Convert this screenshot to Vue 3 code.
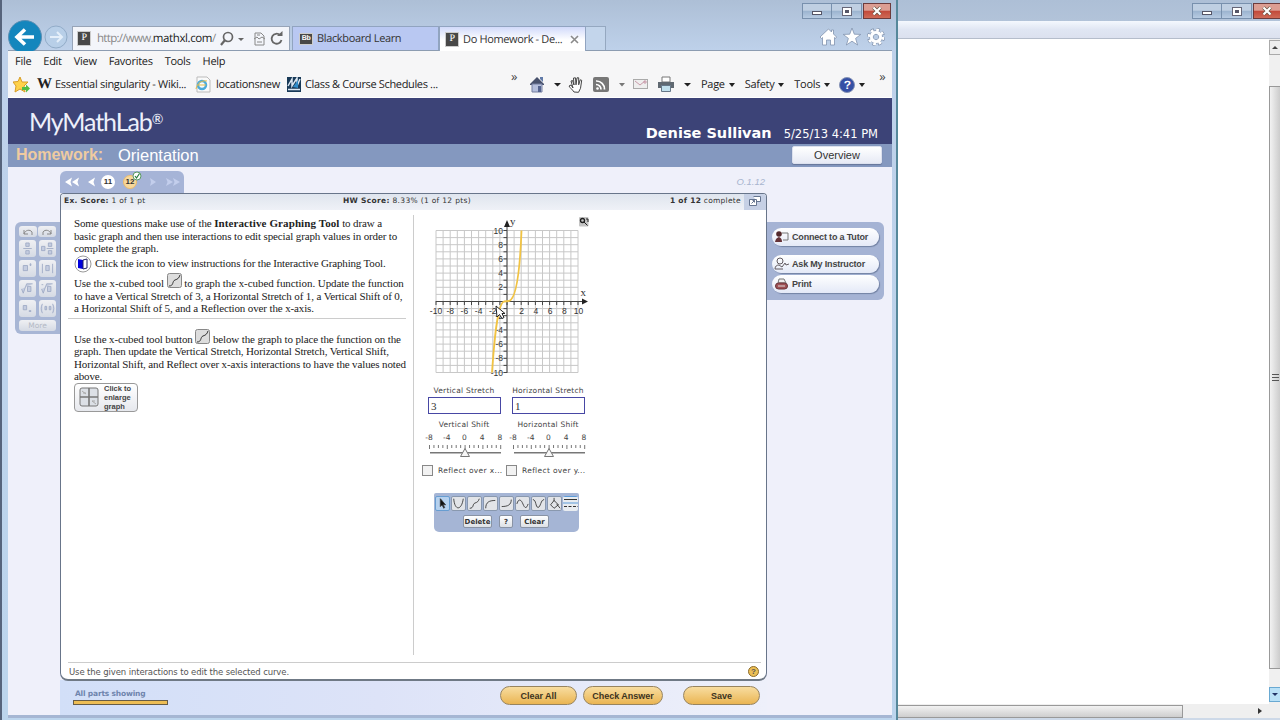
<script setup>
import { ref } from "vue";

const verticalStretch = ref("3");
const horizontalStretch = ref("1");
const reflectX = ref(false);
const reflectY = ref(false);

const menus = ["File", "Edit", "View", "Favorites", "Tools", "Help"];
const commands = ["Page", "Safety", "Tools"];
const shiftLabels = ["-8", "-4", "0", "4", "8"];
const shifts = ["Vertical Shift", "Horizontal Shift"];

// graph geometry
const ox = 507;
const oy = 301.5;
const unit = 7.1;
const grid = Array.from({ length: 21 }, (_, i) => i - 10);
const xLabels = [-10, -8, -6, -4, -2, 2, 4, 6, 8, 10];
const yLabels = [10, 8, 6, 4, 2, -2, -4, -6, -8, -10];

// palette on the left side of the exercise
const palette = [
  "M8 2h4v4H8zM5 8.5h10M8 11h4v4H8z",
  "M3 6h4v5H3zM11 2h4v4h-4zM9 8.5h8M11 11h4v4h-4z",
  "M5 5h5v6H5zM13 3h1v2h-1z",
  "M4 3v11M16 3v11M8 5h4v6H8z",
  "M3 9l2 5 4-11h7M10 6h4v6h-4z",
  "M3 9l2 5 4-11h7M3 4h2M10 6h4v6h-4z",
  "M5 5h4v5H5zM12 11h2v1h-2z",
  "M4 3c-2 4-2 7 0 11M16 3c2 4 2 7 0 11M7 6h2v4H7zM12 6h2v4h-2z",
];

// drawing tools under the graph
const tools = [
  "M5 2v9l2-2 2 4 1-1-2-3h3z",
  "M2 2c1 14 9 14 11 0",
  "M2 13c5 0 3-5 6-6s4-2 5-5",
  "M2 13c0-7 4-9 11-9",
  "M2 11c7 0 11-2 11-8",
  "M1 8c2-7 5-5 7 0s4 6 6 0",
  "M1 3c4 0 3 9 6 9s3-9 7-9",
  "M3 9l4-5 5 5-5 4zM7 5V1M10 8l4 5",
  "M1 3.5h13",
];
</script>

<template>
  <div class="desktop">
    <div class="browser">
      <!-- title bar -->
      <div class="titlebar">
        <div class="win-buttons">
          <span class="win-btn"><i class="min"></i></span>
          <span class="win-btn"><i class="max"></i></span>
          <span class="win-btn close">
            <svg width="12" height="10" viewBox="0 0 12 10"><path d="M2.5 1.5l7 7M9.5 1.5l-7 7" stroke="#654" stroke-width="3.6" /><path d="M2.5 1.5l7 7M9.5 1.5l-7 7" stroke="#fff" stroke-width="2.2" /></svg>
          </span>
        </div>
      </div>
      <!-- address bar and tabs -->
      <div class="navbar">
        <svg class="nav-arrows" width="64" height="34" viewBox="0 0 64 34">
          <circle cx="17" cy="17" r="16.5" fill="#1486bd" stroke="#5b8fb3" />
          <path d="M26 17H10M17 9.500l-8 7.500 8 7.500" fill="none" stroke="#fff" stroke-width="3.6" />
          <circle cx="48" cy="17" r="11" fill="#b8cfe8" stroke="#92acc8" />
          <path d="M42 17h11M49 12l5 5-5 5" fill="none" stroke="#e5effa" stroke-width="2" />
        </svg>
        <div class="address">
          <span class="favicon">P</span>
          <span class="url">http://www.<b>mathxl.com</b>/</span>
          <svg width="72" height="20" viewBox="0 0 72 20" fill="none" stroke="#666">
            <circle cx="11" cy="8" r="4.500" stroke-width="1.700" />
            <path d="M8 11l-4 5" stroke-width="2.200" />
            <path d="M21 9h6l-3 3z" fill="#666" stroke="none" />
            <path d="M38 4h6l3 3v9h-9zM37 10l3-2 2 2 3-2 3 2M40 6h3M40 13h5" stroke="#888" />
            <path d="M63 6a5 5 0 1 0 1.500 5" stroke-width="1.800" />
            <path d="M60 7h5.500V2z" fill="#666" stroke="none" />
          </svg>
        </div>
        <div class="tab">
          <span class="favicon small">Bb</span>
          <span>Blackboard Learn</span>
        </div>
        <div class="tab active">
          <span class="favicon">P</span>
          <span>Do Homework - De...</span>
          <svg width="9" height="9" viewBox="0 0 9 9"><path d="M1 1l7 7M8 1L1 8" stroke="#8a8a8a" stroke-width="1.600" /></svg>
        </div>
        <div class="new-tab"></div>
        <svg class="chrome-icons" width="70" height="20" viewBox="0 0 70 20" fill="#fff" stroke="#8193ae" stroke-width=".8">
          <path d="M2 10l8.500-8 3 3V3h2v4l3 3-1 1.500-1-1V18h-4v-5h-4v5h-4v-7.500l-1 1z" />
          <path d="M34 1l2.300 6.200 6.500.2-5.200 4 2 6.600-5.600-3.800-5.600 3.800 2-6.600-5.200-4 6.500-.2z" />
          <circle cx="58" cy="10" r="7.300" fill="none" stroke="#8193ae" stroke-width="3.500" stroke-dasharray="3.500 2.233" />
          <path fill-rule="evenodd" d="M58 3.500a6.500 6.500 0 1 0 .01 0zM58 7.300a2.700 2.700 0 1 1-.01 0z" />
          <circle cx="58" cy="10" r="7" fill="none" stroke="#fff" stroke-width="2.800" stroke-dasharray="2.700 2.798" />
        </svg>
      </div>
      <div class="menubar">
        <span v-for="m in menus" :key="m">{{ m }}</span>
      </div>
      <div class="favbar">
        <svg width="17" height="18" viewBox="0 0 17 18">
          <path d="M7 1l2 5h6l-4 4 1 6-5-3-5 3 1-6-3-4 5-.5z" fill="#ffd24a" stroke="#d79d28" />
          <path d="M9 11h4V8.500l4 4-4 4V14H9z" fill="#50bd43" />
        </svg>
        <span class="wiki">W</span>
        <span class="link essential">Essential singularity - Wiki...</span>
        <svg width="16" height="17" viewBox="0 0 16 17">
          <path d="M2 1h10l3 3v12H2z" fill="#fafafa" stroke="#bbb" />
          <circle cx="7" cy="9" r="4" fill="none" stroke="#4dabda" stroke-width="2.500" />
          <path d="M3 9h8M1 13C2 7 7 4 12 5" fill="none" stroke="#e6bd49" />
        </svg>
        <span class="link locations">locationsnew</span>
        <svg width="14" height="15" viewBox="0 0 14 15">
          <path d="M0 0h14v15H0z" fill="#183957" />
          <path d="M1 9L5 2v7l5-8v8l3-7M1 12.500h12" fill="none" stroke="#dbe8f3" stroke-width="1.500" />
          <path d="M6 10l5-7v8z" fill="#2e8bc8" />
        </svg>
        <span class="link classes">Class &amp; Course Schedules ...</span>
        <span class="more">»</span>
        <svg class="cmd-icons" width="172" height="20" viewBox="0 0 172 20">
          <path d="M2 9l7-7 7 7v1H2z" fill="#47506c" />
          <path d="M4 9h10v8H4z" fill="#b4bedc" stroke="#757f9f" />
          <path d="M10 11h3v6h-3z" fill="#53628e" />
          <path d="M12 2h3v5l-3-3z" fill="#607aa8" />
          <path d="M26 8h7l-3.500 3.500zM156 8h7l-3.500 3.500z" fill="#222" />
          <path d="M91 8h6l-3 3.500z" fill="#777" />
          <path d="M46 17c-2-3-4-4-5-6l2-1 2 3-2-7 1.500-.5L46 10l-.5-7 2-.2.500 7 1-7h1.700v7l1.500-5 1.500.5-1.200 8-2 4z" fill="#fff" stroke="#444" />
          <rect x="65" y="2" width="16" height="15" rx="2" fill="#777" />
          <path d="M68 6a8 8 0 0 1 8.500 8.500M68 9.500a5 5 0 0 1 5 5" fill="none" stroke="#fff" stroke-width="1.700" />
          <circle cx="69.500" cy="13.500" r="1.300" fill="#fff" />
          <rect x="105.500" y="4.500" width="14" height="9" fill="#eee" stroke="#aaa" />
          <path d="M107 6l5 4 5-4M116 6h2v2h-2z" fill="none" stroke="#c99aaa" />
          <path d="M134 2h8v5h-8z" fill="#fff" stroke="#777" />
          <path d="M130 7h16v6h-16z" fill="#5f6871" />
          <path d="M133.500 10.500h9v6h-9z" fill="#c1e0ed" stroke="#678" />
        </svg>
        <span v-for="c in commands" :key="c" class="command">
          {{ c }}<i class="caret"></i>
        </span>
        <span class="help-ball">?</span>
        <i class="caret"></i>
        <span class="more last">»</span>
      </div>

      <div class="product">
        <div class="logo">MyMathLab<sup>®</sup></div>
        <div class="user"><b>Denise Sullivan</b><span>5/25/13 4:41 PM</span></div>
      </div>
      <div class="assignment">
        <b>Homework:</b>
        <span>Orientation</span>
        <button>Overview</button>
      </div>

      <div class="content">
        <!-- math palette -->
        <div class="palette">
          <div class="palette-pair">
            <span><svg width="18" height="11" viewBox="0 0 18 11"><path d="M5 4v4h4M5 8c1-4 6-5 8-2v3" /></svg></span>
            <span><svg width="18" height="11" viewBox="0 0 18 11"><path d="M13 4v4H9M13 8c-1-4-6-5-8-2v3" /></svg></span>
          </div>
          <div class="palette-grid">
            <span v-for="(p, i) in palette" :key="i">
              <svg width="17" height="17" viewBox="0 0 20 17"><path :d="p" /></svg>
            </span>
          </div>
          <span class="palette-more">More</span>
        </div>

        <div class="exercise">
          <div class="pager-row">
            <div class="pager">
              <svg width="40" height="12" viewBox="0 0 40 12" fill="#fff"><path d="M8 1.500L1 6l7 4.500L6.500 6zM15 1.500L8 6l7 4.500L13.500 6zM31 1.500L24 6l7 4.500L29.500 6z" /></svg>
              <span class="page">11</span>
              <span class="page current">12
                <svg class="check" width="10" height="10" viewBox="0 0 10 10"><circle cx="5" cy="5" r="4" fill="#fff" stroke="#5a9a64" /><path d="M3 5l1.500 2L7.500 2.500" fill="none" stroke="#287c3c" stroke-width="1.200" /></svg>
              </span>
              <svg width="36" height="10" viewBox="0 0 36 10" fill="#c3ceec"><path d="M6 1l6 4-6 4 1-4zM22 1l7 4-7 4 1.500-4zM29 1l7 4-7 4 1.500-4z" /></svg>
            </div>
            <span class="exercise-id">O.1.12</span>
          </div>
          <div class="panel">
            <div class="score">
              <span class="ex"><b>Ex. Score:</b> 1 of 1 pt</span>
              <span class="hw"><b>HW Score:</b> 8.33% (1 of 12 pts)</span>
              <span class="done"><b>1 of 12</b> complete</span>
              <span class="popout">
                <svg width="14" height="12" viewBox="0 0 14 12" fill="#fff" stroke="#667590"><path d="M1.500 4.500h7v6h-7zM5.500 1.500h7v5h-4M3.500 8.500l3-3M4.500 5.500h2v2" /></svg>
              </span>
            </div>
            <div class="work">
              <div class="question">
                <p>
                  <span>Some questions make use of the <b>Interactive Graphing Tool</b> to draw a</span>
                  <span>basic graph and then use interactions to edit special graph values in order to</span>
                  <span>complete the graph.</span>
                </p>
                <p class="instructions">
                  <svg width="18" height="18" viewBox="0 0 18 18"><circle cx="9" cy="9" r="8" fill="#fff" stroke="#999" /><path d="M4 4l5 1v9l-5-1z" fill="#00d" /><path d="M9 5l4-1v9l-4 1z" fill="#fff" stroke="#226" /></svg>
                  <span>Click the icon to view instructions for the Interactive Graphing Tool.</span>
                </p>
                <p>
                  <span class="use">Use the x-cubed tool <svg class="cubed" width="15" height="15" viewBox="0 0 15 15"><rect x=".5" y=".5" width="14" height="14" rx="2" fill="#ddd" stroke="#888" /><path d="M2 13c5 0 3-5 6-6s4-2 5-5" fill="none" stroke="#333" /></svg> to graph the x-cubed function. Update the function</span>
                  <span>to have a Vertical Stretch of 3, a Horizontal Stretch of 1, a Vertical Shift of 0,</span>
                  <span>a Horizontal Shift of 5, and a Reflection over the x-axis.</span>
                </p>
                <hr />
                <p>
                  <span>Use the x-cubed tool button <svg class="cubed" width="15" height="15" viewBox="0 0 15 15"><rect x=".5" y=".5" width="14" height="14" rx="2" fill="#ddd" stroke="#888" /><path d="M2 13c5 0 3-5 6-6s4-2 5-5" fill="none" stroke="#333" /></svg> below the graph to place the function on the</span>
                  <span>graph. Then update the Vertical Stretch, Horizontal Stretch, Vertical Shift,</span>
                  <span>Horizontal Shift, and Reflect over x-axis interactions to have the values noted</span>
                  <span>above.</span>
                </p>
                <button class="enlarge">
                  <svg width="20" height="20" viewBox="0 0 20 20" fill="none" stroke="#777"><rect x="1" y="1" width="18" height="18" rx="2" fill="#dce0e6" /><path d="M10 1v18M1 10h18" stroke-width="1.600" /><path d="M3 4l4 3M13 14l4 3M4 6h3M13 14h3" stroke="#aaa" /></svg>
                  <span>Click to<br />enlarge<br />graph</span>
                </button>
              </div>
              <div class="graph-side">
                <svg class="graph" width="170" height="165" viewBox="425 215 170 165">
                  <g stroke="#c8c8c8">
                    <line v-for="n in grid" :key="'v' + n" :x1="ox + n * unit" :x2="ox + n * unit" y1="230.500" y2="372.500" />
                    <line v-for="n in grid" :key="'h' + n" x1="436" x2="578" :y1="oy + n * unit" :y2="oy + n * unit" />
                  </g>
                  <path d="M436 301.500h148M507 225v148" stroke="#444" />
                  <path d="M582 298.500l6 3-6 3zM504 227l3-7 3 7z" fill="#222" />
                  <g stroke="#444">
                    <line v-for="n in grid" :key="'tx' + n" :x1="ox + n * unit" :x2="ox + n * unit" y1="301" y2="305" />
                    <line v-for="n in grid" :key="'ty' + n" x1="503.500" x2="507" :y1="oy + n * unit" :y2="oy + n * unit" />
                  </g>
                  <g class="ticks">
                    <text v-for="n in xLabels" :key="'lx' + n" :x="ox + n * unit + (n < 0 ? 0 : 0.500)" y="313.500" text-anchor="middle">{{ n }}</text>
                    <text v-for="n in yLabels" :key="'ly' + n" x="503" :y="oy - n * unit + 3" text-anchor="end">{{ n }}</text>
                  </g>
                  <text class="axis" x="510" y="225">y</text>
                  <text class="axis" x="580.500" y="296">x</text>
                  <path d="M492 372.500C494 344 497 304 504 301.500L509 301C516 299 520 270 521.500 230.500" fill="none" stroke="#f1c343" stroke-width="1.800" />
                  <path d="M496 306l1 11 2.500-2.500 2.500 4 2-1-2-4h3z" fill="#fff" stroke="#222" />
                  <rect x="579" y="217" width="9.500" height="9.500" rx="1" fill="#c4c4c4" />
                  <circle cx="582.500" cy="220.500" r="2" fill="none" stroke="#222" stroke-width="1.300" />
                  <path d="M584 222l3.500 3.500M586 219h2v3" fill="none" stroke="#222" />
                </svg>
                <div class="fields">
                  <label>Vertical Stretch<input v-model="verticalStretch" type="text" /></label>
                  <label>Horizontal Stretch<input v-model="horizontalStretch" type="text" /></label>
                </div>
                <div class="sliders">
                  <div v-for="s in shifts" :key="s" class="slider">
                    <span class="slider-name">{{ s }}</span>
                    <div class="numbers"><span v-for="n in shiftLabels" :key="n">{{ n }}</span></div>
                    <svg width="74" height="14" viewBox="0 0 74 14">
                      <path v-for="n in 17" :key="n" :d="`M${1.500 + (n - 1) * 4.450} 1v${n % 4 === 1 ? 4 : 3}`" stroke="#777" />
                      <path d="M2 8.500h71" stroke="#777" /><path d="M2 9.500h71" stroke="#bbb" />
                      <path d="M37 4.500l4.500 8h-9z" fill="#f7f7f7" stroke="#777" />
                    </svg>
                  </div>
                </div>
                <div class="reflects">
                  <label><input v-model="reflectX" type="checkbox" />Reflect over x...</label>
                  <label><input v-model="reflectY" type="checkbox" />Reflect over y...</label>
                </div>
                <div class="toolbar">
                  <div class="tools">
                    <svg v-for="(t, i) in tools" :key="i" :class="{ selected: i === 0, pointer: i === 0, lines: i === 8 }" width="15" height="15" viewBox="0 0 15 15">
                      <path :d="t" />
                      <path v-if="i === 8" d="M0 .5h15M0 7h15" stroke="#5c9bd8" /><path v-if="i === 8" d="M1 10.500h14" stroke-dasharray="3 1.500" />
                    </svg>
                  </div>
                  <div class="actions">
                    <button class="delete">Delete</button>
                    <button class="what">?</button>
                    <button class="clear">Clear</button>
                  </div>
                </div>
              </div>
            </div>
            <div class="status">
              <span>Use the given interactions to edit the selected curve.</span>
              <i>?</i>
            </div>
          </div>
          <div class="footer">
            <div class="parts"><span>All parts showing</span><i></i></div>
            <button class="clear-all">Clear All</button>
            <button class="check-answer">Check Answer</button>
            <button class="save">Save</button>
          </div>
        </div>

        <div class="side">
          <button>
            <svg width="16" height="14" viewBox="0 0 16 14"><circle cx="5" cy="4" r="2.800" fill="#53282b" /><path d="M1 12c1-4 2-4 4-5 2 1 3 2 3 5z" fill="#653237" /><path d="M8 3h6v7H9" fill="none" stroke="#777" /></svg>
            <span>Connect to a Tutor</span>
          </button>
          <button class="ask">
            <svg width="16" height="14" viewBox="0 0 16 14" fill="none" stroke="#625b60"><circle cx="6" cy="4" r="3" /><path d="M1 12c0-3 2-4 4-4l3 2M1 12h8M8 10l3-4 1 2 3-1" /></svg>
            <span>Ask My Instructor</span>
          </button>
          <button class="print">
            <svg width="16" height="14" viewBox="0 0 16 14"><path d="M4 6l1-4h5l2 4z" fill="#eee" stroke="#777" /><rect x="1.500" y="6" width="12" height="6" rx="3" fill="#9f5155" stroke="#683338" /><path d="M4 9h7" stroke="#ddd" /></svg>
            <span>Print</span>
          </button>
        </div>
      </div>
    </div>

    <!-- window behind -->
    <div class="behind">
      <div class="titlebar">
        <div class="win-buttons">
          <span class="win-btn"><i class="min"></i></span>
          <span class="win-btn"><i class="max"></i></span>
          <span class="win-btn close">
            <svg width="12" height="10" viewBox="0 0 12 10"><path d="M2.500 1.500l7 7M9.500 1.500l-7 7" stroke="#654" stroke-width="3.600" /><path d="M2.500 1.500l7 7M9.500 1.500l-7 7" stroke="#fff" stroke-width="2.200" /></svg>
          </span>
        </div>
      </div>
      <div class="behind-strip"></div>
      <div class="behind-body">
        <div class="blank"></div>
        <div class="vscroll">
          <span class="arrow"><i class="up"></i></span>
          <span class="gap"></span>
          <span class="thumb"><i></i><i></i><i></i></span>
          <span class="gap-end"></span>
          <span class="arrow blue"><i class="down"></i></span>
        </div>
      </div>
      <div class="hscroll"><span class="hthumb"></span><i></i></div>
    </div>
  </div>
</template>

<style>
body {
  margin: 0;
  overflow: hidden;
}
</style>

<style scoped>
* {
  box-sizing: border-box;
}
svg {
  display: block;
  flex: none;
}
button {
  font-family: inherit;
  padding: 0;
  white-space: nowrap;
}
.desktop {
  display: grid;
  grid-template-columns: 898px 382px;
  width: 1280px;
  height: 720px;
  overflow: hidden;
  background: #fff;
  font-family: "DejaVu Sans", sans-serif;
  white-space: nowrap;
}
.browser {
  display: flex;
  flex-direction: column;
  height: 720px;
  padding: 0 4px 0 6px;
  background: linear-gradient(#adbfd6, #bed1ea 50px, #bcd5ed);
  border-left: 2px solid #56647c;
  border-right: 2px solid #56889b;
}
.titlebar {
  display: flex;
  flex: none;
  justify-content: flex-end;
  height: 26px;
  padding: 3px 1px 0 0;
}
.win-buttons {
  display: flex;
  height: 16px;
}
.win-btn {
  display: flex;
  flex: none;
  align-items: center;
  justify-content: center;
  width: 30px;
  height: 16px;
  border: 1px solid #7890ad;
  border-left-width: 0;
  background: linear-gradient(#bfcfe2 45%, #9bb3cf 50%, #b7cbe2);
}
.win-btn:first-child {
  border-left-width: 1px;
}
.win-btn.close {
  width: 28px;
  margin-left: 1px;
  border: 1px solid #6c3b3c;
  background: linear-gradient(#dc9d92 45%, #c2493a 50%, #cf6a56);
}
.min {
  width: 10px;
  height: 4px;
  margin-top: 4px;
  background: #fff;
  border: 1px solid #556;
}
.max {
  width: 10px;
  height: 9px;
  background: #556;
  border: 3px solid #fff;
  outline: 1px solid #667;
  outline-offset: -1px;
}
.navbar {
  display: flex;
  flex: none;
  height: 25px;
  border-bottom: 1px solid #8c9cb1;
  font: 11px "Open Sans", sans-serif;
  letter-spacing: -0.35px;
  text-rendering: geometricPrecision;
  color: #333;
}
.nav-arrows {
  margin: -6px 0 0;
}
.address {
  display: flex;
  align-items: center;
  width: 218px;
  height: 24px;
  padding-left: 5px;
  border: 1px solid #97a4b7;
  border-bottom: 0;
  background: #f3f5fa;
}
.favicon {
  flex: none;
  width: 12px;
  height: 13px;
  background: #484848;
  color: #fff;
  font: 10px/12px "Liberation Serif", serif;
  text-align: center;
  outline: 1px solid #ccc;
}
.favicon.small {
  height: 10px;
  font: bold 7px/9px "Liberation Sans", sans-serif;
}
.url {
  width: 121px;
  margin-left: 7px;
  color: #888;
  font-size: 11.500px;
  letter-spacing: -0.7px;
}
.url b {
  color: #222;
  font-weight: 400;
  letter-spacing: -0.4px;
}
.tab {
  display: flex;
  align-items: center;
  width: 147px;
  margin-left: 2px;
  padding-left: 7px;
  border: 1px solid #91a4c0;
  border-bottom: 0;
  background: #b9c8f2;
}
.tab span + span {
  margin-left: 5px;
}
.tab.active {
  width: 147px;
  height: 25px;
  margin-left: 0;
  padding-left: 6px;
  background: linear-gradient(#d1dafa, #fff 55%);
}
.tab.active span + span {
  width: 101px;
}
.tab.active svg {
  margin-left: 6px;
}
.new-tab {
  width: 20px;
  border: 1px solid #95a8c0;
  border-left: 0;
  border-bottom: 0;
  background: #c3d5eb;
}
.chrome-icons {
  margin: 1px 0 0 212px;
}
.menubar {
  display: flex;
  flex: none;
  gap: 12px;
  height: 21px;
  padding-left: 7px;
  background: #f6f6f7;
  color: #222;
  font: 11px/21px "Open Sans", sans-serif;
  letter-spacing: -0.28px;
  text-rendering: geometricPrecision;
}
.favbar {
  display: flex;
  flex: none;
  align-items: center;
  height: 26px;
  padding-left: 5px;
  background: #f6f6f7;
  border-bottom: 1px solid #fff;
  color: #222;
  font: 11px "Open Sans", sans-serif;
  letter-spacing: -0.3px;
  text-rendering: geometricPrecision;
}
.wiki {
  width: 18px;
  margin-left: 7px;
  font: bold 15px "Liberation Serif", serif;
}
.essential {
  width: 140px;
}
.locations {
  width: 71px;
  margin-left: 5px;
}
.classes {
  width: 137px;
  margin-left: 4px;
  letter-spacing: -0.35px;
}
.more {
  width: 10px;
  margin: -18px 0 0 69px;
  color: #444;
  font-size: 13px;
}
.cmd-icons {
  margin-left: 7px;
}
.command {
  display: flex;
  align-items: center;
  gap: 4px;
  margin-left: 10px;
}
.cmd-icons + .command {
  margin-left: 1px;
}
.caret {
  flex: none;
  border: 3.500px solid transparent;
  border-top: 4px solid #222;
  border-bottom: 0;
}
.help-ball {
  width: 16px;
  height: 16px;
  margin: 0 4px 0 9px;
  border: 1px solid #8794b6;
  border-radius: 50%;
  background: #3550a5;
  color: #fff;
  font: bold 12px/14px "Liberation Sans", sans-serif;
  text-align: center;
}
.more.last {
  margin-left: 14px;
}
.product {
  display: flex;
  flex: none;
  justify-content: space-between;
  height: 46px;
  padding-left: 21px;
  background: #3c4377;
  color: #fff;
}
.logo {
  color: #edf0fb;
  font: 25px/48px Lato, sans-serif;
  letter-spacing: -1.1px;
  text-rendering: geometricPrecision;
}
.logo sup {
  font-size: 14px;
  line-height: 0;
  vertical-align: 7px;
}
.user {
  padding: 26px 14px 0 0;
  font-size: 12px;
  line-height: 18px;
}
.user span {
  font-size: 11.500px;
}
.user b {
  margin-right: 12px;
  font-size: 14.500px;
}
.assignment {
  display: flex;
  flex: none;
  align-items: center;
  height: 23px;
  padding: 0 10px 1px 8px;
  background: #8498bf;
  color: #fff;
  font: 16px "Liberation Sans", sans-serif;
}
.assignment b {
  width: 102px;
  color: #efcba0;
}
.assignment span {
  font-size: 16.500px;
}
.assignment button {
  width: 90px;
  height: 18px;
  margin-left: auto;
  border: 1px solid #dce1ee;
  border-radius: 2px;
  background: linear-gradient(#fff, #e7eaf5);
  box-shadow: 0 1px 1px #66769a;
  color: #333;
  font-size: 11px;
}
.content {
  display: grid;
  grid-template-columns: 52px 707px 125px;
  flex: none;
  height: 551px;
  border-bottom: 3px solid #a5b6d3;
  background: #eff0fa;
}
.palette {
  align-self: start;
  width: 45px;
  height: 112px;
  margin: 55px 0 0 7px;
  padding: 4px 4px 0;
  border-radius: 6px 0 0 6px;
  background: #a8b6d5;
}
.palette svg {
  fill: #c5cde0;
  stroke: #9da9c4;
}
.palette span {
  border-radius: 3px;
  background: linear-gradient(#eff0f3, #d5dae4);
}
.palette-pair {
  display: flex;
  gap: 1px;
}
.palette-pair svg {
  fill: none;
  stroke: #888;
}
.palette-grid {
  display: grid;
  grid-template-columns: 17px 17px;
  grid-auto-rows: 17px;
  gap: 3px;
  margin: 3px 0;
}
.palette .palette-more {
  display: block;
  width: 37px;
  height: 11px;
  color: #b3b9c5;
  font-size: 7.500px;
  line-height: 11px;
  text-align: center;
}
.exercise {
  display: flex;
  flex-direction: column;
  background: linear-gradient(90deg, #d2dff8, #dde3f8 45%, #eef0fa) bottom / 100% 35px no-repeat;
}
.pager-row {
  display: flex;
  flex: none;
  justify-content: space-between;
  height: 26px;
  padding-top: 4px;
}
.pager {
  display: flex;
  align-items: center;
  width: 124px;
  padding-left: 4px;
  border-radius: 6px 6px 0 0;
  background: #a6b4d7;
}
.page {
  position: relative;
  width: 14px;
  height: 14px;
  margin-left: -3px;
  border-radius: 50%;
  background: #fff;
  color: #333;
  font: bold 8px/14px "Liberation Sans", sans-serif;
  text-align: center;
}
.page.current {
  margin: 0 7px 0 8px;
  background: #f7d89b;
  border: 1px solid #eebc6c;
  line-height: 12px;
}
.check {
  position: absolute;
  top: -5px;
  right: -6px;
}
.exercise-id {
  padding-right: 2px;
  color: #a8b5cf;
  font: italic 9.500px/22px "Liberation Sans", sans-serif;
}
.panel {
  display: flex;
  flex: none;
  flex-direction: column;
  height: 488px;
  border: 1px solid #68758a;
  border-bottom: 2px solid #6f7985;
  border-radius: 4px 4px 8px 8px;
  background: #fff;
  overflow: hidden;
}
.score {
  display: flex;
  flex: none;
  height: 16px;
  padding-left: 3px;
  background: linear-gradient(#dfe5ee, #eff1f7);
  color: #333;
  font-size: 7.500px;
  letter-spacing: 0.26px;
  line-height: 14px;
}
.ex {
  width: 279px;
}
.hw {
  width: 327px;
  letter-spacing: 0.32px;
}
.popout {
  width: 22px;
  height: 16px;
  margin-left: auto;
  padding: 1px 0 0 4px;
  background: #c6d0e5;
}
.work {
  display: flex;
  flex: none;
  height: 452px;
}
.question {
  width: 353px;
  height: 440px;
  margin-top: 5px;
  padding: 2px 0 0 13px;
  border-right: 1px solid #ccc;
  color: #222;
  font: 11px/12.500px "Liberation Serif", serif;
  letter-spacing: -0.13px;
}
.question b {
  letter-spacing: 0.1px;
}
.question .use {
  letter-spacing: -0.07px;
}
.question p {
  margin: 0;
}
.question p > span {
  display: block;
  height: 12.500px;
}
.question .instructions {
  display: flex;
  align-items: center;
  gap: 3px;
  height: 18px;
  margin: 0 0 4.500px;
  letter-spacing: -0.17px;
}
.cubed {
  display: inline-block;
  vertical-align: -1px;
  margin: -4px 0 0;
}
hr {
  width: 338px;
  margin: 3px 0 14px -6px;
  border: 0;
  border-top: 1px solid #ccc;
}
.enlarge {
  display: flex;
  align-items: center;
  gap: 5px;
  width: 64px;
  height: 29px;
  padding-left: 4px;
  border: 1px solid #999;
  border-radius: 4px;
  background: linear-gradient(#fff, #e6e8ed);
  color: #444;
  font: bold 7.500px/9px "Liberation Sans", sans-serif;
  text-align: left;
}
.graph-side {
  width: 170px;
  margin: 5px 0 0 11px;
  color: #444;
  font-size: 7.500px;
}
.ticks {
  fill: #333;
  font: 8.500px "Liberation Sans", sans-serif;
}
.axis {
  fill: #333;
  font: 11px "Liberation Serif", serif;
}
.fields,
.sliders {
  display: flex;
  gap: 12px;
  padding-left: 3px;
}
.fields {
  margin-top: 5px;
}
.fields label {
  width: 72px;
  letter-spacing: 0.22px;
  line-height: 11px;
  text-align: center;
}
.fields input {
  display: block;
  width: 73px;
  height: 17px;
  margin-top: 1px;
  padding: 0 2px;
  border: 1px solid #4747a4;
  color: #333;
  font: 11px "Liberation Serif", serif;
}
.sliders {
  margin-top: 5px;
}
.slider {
  width: 72px;
  height: 40px;
}
.slider-name {
  display: block;
  letter-spacing: 0.22px;
  line-height: 12px;
  text-align: center;
}
.numbers {
  display: flex;
  justify-content: space-between;
  margin: 1px -8px 0 -7px;
  line-height: 12px;
}
.numbers span {
  width: 16px;
  text-align: center;
}
.reflects {
  display: flex;
  margin: 6px 0 0 -3px;
}
.reflects label {
  display: flex;
  align-items: center;
  gap: 5px;
  width: 84px;
  letter-spacing: 0.33px;
  line-height: 11px;
}
.reflects input {
  appearance: none;
  flex: none;
  width: 11px;
  height: 11px;
  margin: 0;
  border: 1px solid #888;
  background: #f2f2f2;
}
.toolbar {
  width: 145px;
  height: 39px;
  margin: 17px 0 0 9px;
  padding: 3px 1px;
  border-radius: 2px 2px 5px 5px;
  background: #a5b5d5;
}
.tools {
  display: flex;
  justify-content: space-between;
}
.tools svg {
  border: 1px solid #8998ae;
  border-radius: 2px;
  background: #e2e4e8;
  fill: none;
  stroke: #333;
}
.tools svg.selected {
  background: #b6d1ee;
  border-color: #679dd1;
}
.tools svg.pointer {
  fill: #111;
}
.tools svg.lines {
  border: 0;
  background: #e8ecf0;
}
.actions {
  display: flex;
  gap: 7px;
  margin: 4px 0 0 28px;
}
.actions button {
  width: 29px;
  height: 13px;
  border: 1px solid #8993a4;
  border-radius: 2px;
  background: linear-gradient(#fff, #dce0e6);
  color: #333;
  font-size: 7px;
  font-weight: bold;
  line-height: 10px;
}
.actions .what {
  width: 14px;
}
.status {
  display: flex;
  align-items: center;
  justify-content: space-between;
  height: 18px;
  margin: 0 5px 0 7px;
  padding: 1px 2px 0 1px;
  border-top: 1px solid #ccc;
  color: #555;
  font-size: 8.500px;
  letter-spacing: -0.12px;
}
.status i {
  width: 11px;
  height: 11px;
  border: 1px solid #8b6a2a;
  border-radius: 50%;
  background: #edbf54;
  font: bold 8px/9px "Liberation Sans", sans-serif;
  text-align: center;
}
.footer {
  display: flex;
  padding: 5px 7px 0 13px;
}
.parts {
  width: 427px;
  padding-top: 3px;
  color: #6f85ad;
  font-size: 7.500px;
  font-weight: bold;
  letter-spacing: -0.18px;
  line-height: 10px;
}
.parts span {
  margin-left: 2px;
}
.parts i {
  display: block;
  width: 95px;
  height: 5px;
  margin-top: 1px;
  border: 1px solid #665c47;
  background: #edbd54;
}
.footer button {
  width: 77px;
  height: 19px;
  border: 1px solid #98845e;
  border-radius: 10px;
  background: linear-gradient(#f8dda0, #eab553);
  color: #3c331f;
  font: bold 9px "Liberation Sans", sans-serif;
}
.footer .check-answer {
  width: 80px;
  margin-left: 6px;
}
.footer .save {
  margin-left: 20px;
}
.side {
  align-self: start;
  height: 78px;
  width: 117px;
  margin-top: 55px;
  padding: 6px 5px;
  border-radius: 0 6px 6px 0;
  background: #a5b3d4;
}
.side button {
  display: flex;
  align-items: center;
  gap: 2px;
  width: 107px;
  height: 18px;
  padding-left: 2px;
  border: 0;
  border-radius: 9px;
  background: linear-gradient(#fff, #e4e9f7);
  box-shadow: 1px 1px 1px #7382a3;
  color: #444;
  font: bold 9px "Liberation Sans", sans-serif;
  letter-spacing: -0.18px;
}
.side .ask {
  margin-top: 9px;
}
.side .print {
  margin-top: 2px;
}
.behind {
  display: flex;
  flex-direction: column;
  height: 720px;
  background: #fff;
}
.behind .titlebar {
  height: 21px;
  padding-right: 0;
  background: linear-gradient(#adbfd6, #b2c3d9);
}
.behind .win-buttons {
  margin-right: -1px;
}
.behind-strip {
  flex: none;
  height: 18px;
  border-bottom: 1px solid #b5bdcb;
  background: linear-gradient(#f4f8fe, #e0e6f3 50%, #dce1ef);
}
.behind-body {
  display: flex;
  height: 665px;
  overflow: hidden;
}
.blank {
  flex: 1;
}
.vscroll {
  display: flex;
  flex-direction: column;
  width: 11px;
  padding-top: 1px;
  background: #f0f0f0;
}
.arrow {
  display: flex;
  align-items: center;
  justify-content: center;
  height: 15px;
  border: 1px solid #aaa;
  border-right: 0;
  background: #eee;
}
.arrow.blue {
  border-color: #69a9d2;
  background: #b9e1f7;
}
.arrow i {
  border: 3px solid transparent;
}
.arrow .up {
  border-top: 0;
  border-bottom-color: #444;
}
.arrow .down {
  border-bottom: 0;
  border-top-color: #236;
}
.gap {
  height: 31px;
}
.thumb {
  display: flex;
  flex-direction: column;
  align-items: center;
  justify-content: center;
  gap: 2px;
  height: 583px;
  border: 1px solid #999;
  border-right: 0;
  background: linear-gradient(90deg, #f2f2f2, #ccc);
}
.thumb i {
  width: 7px;
  height: 1px;
  background: #555;
}
.gap-end {
  height: 18px;
}
.hscroll {
  display: flex;
  align-items: center;
  height: 16px;
  background: #efefef;
  border-bottom: 2px solid #cdd9e8;
}
.hthumb {
  width: 285px;
  height: 13px;
  border: 1px solid #999;
  border-left: 0;
  background: linear-gradient(#f2f2f2, #cecece);
}
.hscroll i {
  margin-left: 75px;
  border: 3px solid transparent;
  border-left: 4px solid #333;
  border-right: 0;
}
</style>
